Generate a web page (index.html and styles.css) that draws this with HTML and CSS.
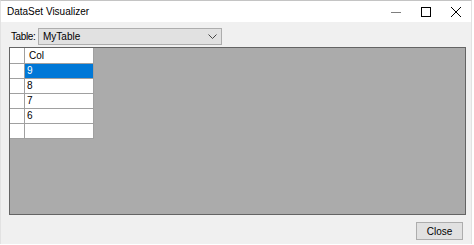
FILE: index.html
```html
<!DOCTYPE html>
<html>
<head>
<meta charset="utf-8">
<link rel="stylesheet" href="styles.css">
</head>
<body>
<div class="window">
  <div class="titlebar">
    <span class="title">DataSet Visualizer</span>
    <div class="controls">
      <span class="ctl"><svg width="10" height="10" viewBox="0 0 10 10"><path d="M0 5.5H10" stroke="#000" stroke-width="1"/></svg></span>
      <span class="ctl"><svg width="10" height="10" viewBox="0 0 10 10"><rect x="0.5" y="0.5" width="9" height="9" fill="none" stroke="#000" stroke-width="1"/></svg></span>
      <span class="ctl"><svg width="10" height="10" viewBox="0 0 10 10"><path d="M0 0L10 10M10 0L0 10" stroke="#000" stroke-width="1"/></svg></span>
    </div>
  </div>
  <div class="client">
    <div class="toolbar">
      <span class="label">Table:</span>
      <div class="combo">
        <span>MyTable</span>
        <svg width="9" height="5" viewBox="0 0 9 5"><path d="M0.5 0.5L4.5 4.5L8.5 0.5" fill="none" stroke="#444" stroke-width="1"/></svg>
      </div>
    </div>
    <div class="grid">
      <table class="dgv">
        <tr class="hdr"><td class="rh"></td><td class="cell">Col</td></tr>
        <tr class="sel"><td class="rh"></td><td class="cell">9</td></tr>
        <tr><td class="rh"></td><td class="cell">8</td></tr>
        <tr><td class="rh"></td><td class="cell">7</td></tr>
        <tr><td class="rh"></td><td class="cell">6</td></tr>
        <tr><td class="rh"></td><td class="cell"></td></tr>
      </table>
    </div>
    <div class="footer">
      <button class="btn">Close</button>
    </div>
  </div>
</div>
</body>
</html>
```
FILE: styles.css
```css
html, body {
  margin: 0;
  padding: 0;
  background: #ffffff;
}
body {
  width: 474px;
  height: 245px;
  overflow: hidden;
  font-family: "Liberation Sans", Arial, sans-serif;
  font-size: 10px;
  color: #000;
}
.window {
  width: 470px;
  height: 243px;
  border-top: 1px solid #c4c4c4;
  border-left: 1px solid #e2e2e2;
  border-right: 1px solid #e2e2e2;
  display: flex;
  flex-direction: column;
}
.titlebar {
  height: 21px;
  background: #fff;
  display: flex;
  align-items: center;
  justify-content: space-between;
}
.title {
  padding-left: 6px;
  font-size: 10px;
}
.controls {
  display: flex;
  height: 21px;
}
.ctl {
  width: 30px;
  display: flex;
  align-items: center;
  justify-content: center;
}
.controls .ctl:first-child svg { opacity: 0.5; }
.client {
  flex: 1;
  background: #f0f0f0;
  padding: 6px 5px 0 8px;
  display: flex;
  flex-direction: column;
}
.toolbar {
  display: flex;
  align-items: center;
  height: 17px;
}
.label {
  width: 29px;
  padding-left: 2px;
  box-sizing: border-box;
  letter-spacing: -0.4px;
}
.combo {
  width: 174px;
  height: 15px;
  border: 1px solid #adadad;
  background: #e1e1e1;
  display: flex;
  align-items: center;
  justify-content: space-between;
  padding: 0 4px 0 4px;
  box-sizing: content-box;
}
.grid {
  margin-top: 2px;
  border: 1px solid #646464;
  background: #ababab;
  box-sizing: border-box;
  width: 457px;
  height: 168px;
}
.dgv {
  border-collapse: collapse;
}
.dgv td {
  height: 14px;
  padding: 0;
  border: 1px solid #a0a0a0;
  background: #fff;
  line-height: 14px;
}
.dgv tr.hdr td { height: 15px; border-top: none; }
.dgv td.rh {
  width: 14px;
  border-left: none;
}
.dgv td.cell {
  width: 69px;
  padding-left: 2px;
  box-sizing: border-box;
}
.dgv tr.hdr td.cell {
  padding-left: 4px;
}
.dgv tr.sel td.cell {
  background: #0078d7;
  color: #fff;
}
.footer {
  display: flex;
  justify-content: flex-end;
  padding-top: 7px;
  padding-right: 3px;
}
.btn {
  width: 47px;
  height: 18px;
  border: 1px solid #adadad;
  background: #e1e1e1;
  font-family: "Liberation Sans", Arial, sans-serif;
  font-size: 10px;
  padding: 0;
  color: #000;
}
```
